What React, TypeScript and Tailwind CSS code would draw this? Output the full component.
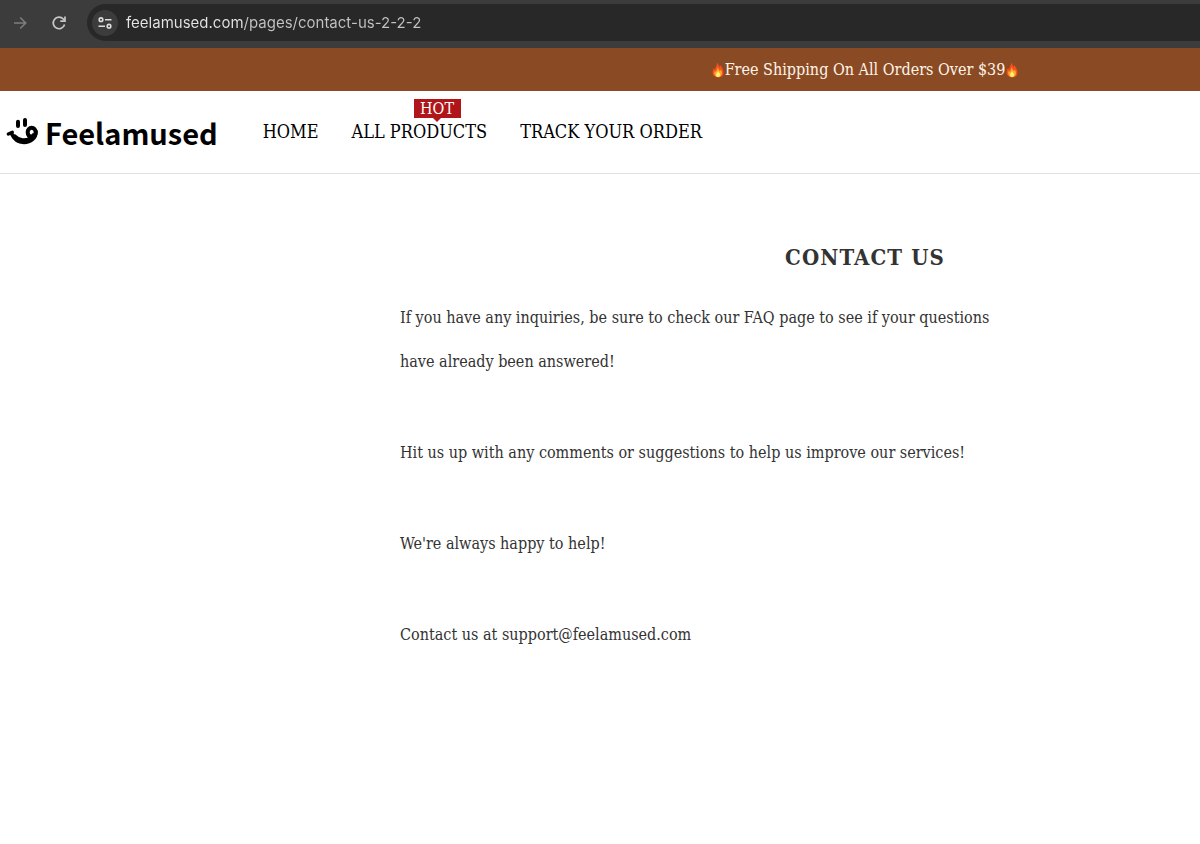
import React from "react";

const serif = "font-['DejaVu_Serif_Condensed','DejaVu_Serif',serif]";

const paragraphs = [
  "Hit us up with any comments or suggestions to help us improve our services!",
  "We're always happy to help!",
];

const Flame = () => (
  <svg viewBox="0 0 14 16" className="w-[14px] h-4 shrink-0" aria-hidden="true">
    <path d="M6.2.6C7.4 2.300 7.600 3.600 8.300 5c.5-.7.6-1.300.6-2 2 2 3.600 4.600 3.600 7.400 0 3-2.200 5-5.300 5S1.600 13.400 1.600 10.500c0-2 .8-3.600 1.500-4.800.1 1 .4 1.600.9 2.100C4.200 5.200 6.300 3.500 6.200.6z" fill="#f4511e" />
    <path d="M6.800 5c.3 1.800 1.500 2.600 2 4 .5-.4.700-.9.8-1.500 1 1.200 1.400 2.300 1.400 3.500 0 2.400-1.600 4-3.800 4s-4-1.500-4-3.800c0-1.100.3-1.800.7-2.500.3.700.7 1 1.200 1.200C5.200 8 6.600 7 6.800 5z" fill="#ffa726" />
    <path d="M7 9c.3 1.200 2.200 2 2.200 3.800 0 1.300-.9 2.200-2.100 2.200S5 14.100 5 12.900C5 11.300 6.800 10.600 7 9z" fill="#fff176" />
  </svg>
);

const BrowserBar = () => (
  <div className="h-12 bg-[#3c3c3c] flex items-center pb-[3px] pl-3 font-['Inter',sans-serif]">
    <button aria-label="Forward" className="text-[#7d7d7d]">
      <svg viewBox="0 0 16 16" className="w-4 h-4" fill="none" stroke="currentColor" strokeWidth="1.600">
        <path d="M2 8h11.500M8.200 2.500 13.700 8l-5.500 5.500" />
      </svg>
    </button>
    <button aria-label="Reload" className="ml-[23px] text-[#c7c7c7]">
      <svg viewBox="0 0 16 16" className="w-4 h-4" fill="none" stroke="currentColor" strokeWidth="1.700">
        <path d="M13.600 9.600A5.800 5.800 0 1 1 12.300 4l1.400 1.500" />
        <path d="M14 1.500v4.700H9.300" />
      </svg>
    </button>
    <div className="ml-5 flex-1 h-[37px] flex items-center rounded-l-full bg-[#282828] pl-[5px]">
      <button aria-label="Site information" className="w-[26px] h-[26px] rounded-full bg-[#3c3c3c] flex items-center justify-center text-[#dedede]">
        <svg viewBox="0 0 14 14" className="w-[14px] h-[14px]" fill="none" stroke="currentColor" strokeWidth="1.600">
          <circle cx="3" cy="3.700" r="1.800" />
          <path d="M7 3.700h6.500M.5 10.200H7" />
          <circle cx="11" cy="10.200" r="1.800" />
        </svg>
      </button>
      {/* the host is brighter than the path */}
      <input
        aria-label="Address"
        defaultValue="feelamused.com/pages/contact-us-2-2-2"
        className="ml-2 flex-1 min-w-0 text-[15px] leading-5 text-transparent bg-clip-text bg-[linear-gradient(90deg,#e6e6e6_117px,#c4c4c4_117px)] outline-none"
      />
    </div>
  </div>
);

const Logo = () => (
  <a href="#" className="flex items-center text-black">
    <svg viewBox="18 28 96 84" className="w-8 h-7" fill="none" stroke="#000" strokeLinecap="round" strokeLinejoin="round" aria-hidden="true">
      <path d="M54 39v13M75 34v15" strokeWidth="12" />
      <path d="M25 76 37 71" strokeWidth="10" />
      <path d="M34 74C42 92 55 101 72 101c20 0 36-13 36-32" strokeWidth="11" />
      <path d="M44 85C54 96 64 97 72 96c14-1 23-6 28-14" strokeWidth="15" />
      <ellipse cx="95" cy="71" rx="12" ry="14" strokeWidth="12" />
    </svg>
    <span className="ml-[7px] text-[29px] leading-10 font-bold font-['Noto_Sans_CJK_SC',sans-serif]">Feelamused</span>
  </a>
);

const App = () => {
  return (
    <div className={`min-h-screen bg-white overflow-x-hidden ${serif}`}>
      <BrowserBar />
      <div className="h-[43px] bg-[#8a4b24] text-[#fff3e8] flex items-center justify-center pl-[530px] text-base leading-6 whitespace-nowrap">
        <Flame />
        <span>Free Shipping On All Orders Over $39</span>
        <Flame />
      </div>
      <header className="h-[83px] border-b border-[#e2e2e2] flex items-center pl-[6px]">
        <Logo />
        <nav className="ml-[45px]">
          <ul className="flex items-center gap-[33px] text-lg leading-6 text-black whitespace-nowrap">
            <li><a href="#">HOME</a></li>
            <li className="relative">
              <a href="#">ALL PRODUCTS</a>
              <span className="absolute bottom-full left-[62px] mb-[-2px] flex flex-col items-center">
                <span className="w-[47px] h-[19px] bg-[#b01519] text-white text-center text-base leading-[19px]">HOT</span>
                <span className="border-x-4 border-t-4 border-x-transparent border-t-[#b01519]" />
              </span>
            </li>
            <li><a href="#">TRACK YOUR ORDER</a></li>
          </ul>
        </nav>
      </header>
      <main className="pl-[400px] pt-[63px] text-[#333]">
        <h1 className="pl-[130px] text-center text-[22px] leading-10 font-bold tracking-wider">CONTACT US</h1>
        <div className="mt-[19px] max-w-[600px] text-base leading-[44px] flex flex-col gap-[47px]">
          <p>If you have any inquiries, be sure to check our FAQ page to see if your questions have already been answered!</p>
          {paragraphs.map((text) => (
            <p key={text}>{text}</p>
          ))}
          <p>Contact us at support@feelamused.com</p>
        </div>
      </main>
    </div>
  );
};

export default App;
